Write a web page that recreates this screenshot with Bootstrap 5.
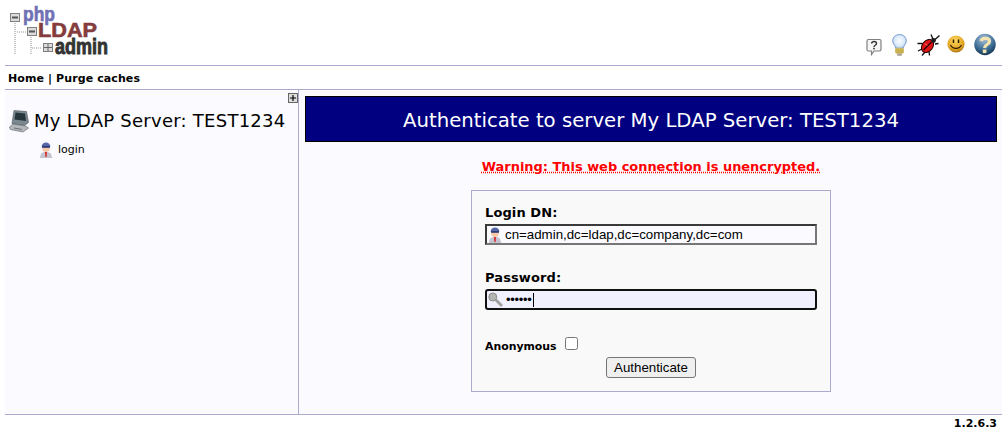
<!DOCTYPE html>
<html lang="en"><head><meta charset="utf-8"><title>phpLDAPadmin</title>
<link href="https://cdn.jsdelivr.net/npm/bootstrap@5.3.0/dist/css/bootstrap.min.css" rel="stylesheet">
<style>
html,body{height:433px;overflow:hidden}
body{background:#fff;color:#000;font-family:"DejaVu Sans",sans-serif;font-size:11px}
.pla-head{height:65px;padding-right:6px}
.pla-logo{display:block}
.pla-tools{padding-bottom:9px}
.pla-t1{margin-right:10px}
.pla-t2{margin-right:10px}
.pla-t3{margin-right:7px}
.pla-t4{margin-right:9px;margin-bottom:2px}
.pla-nav{margin-left:5px;height:25px;border-top:1px solid #aaaacc;border-bottom:1px solid #aaaacc;padding-left:3px;font-weight:700;font-size:11px;line-height:25px;color:#000;letter-spacing:.1px}
.pla-main{margin-left:5px;height:325px;background:#fafaff;border-bottom:1px solid #aaaacc}
.pla-side{width:294px;border-right:1px solid #aaaacc;position:relative;flex:none}
.pla-plus{position:absolute;right:0;top:3px;display:block}
.pla-server{margin:18px 0 0 4px;gap:5px;font-size:18px;letter-spacing:.25px;line-height:26px;height:26px;white-space:nowrap}
.pla-login{margin:7px 0 0 34px;gap:5px;font-size:11px;line-height:17px;color:#000}
.pla-content{flex:1;padding:6px 5px 0 6px;min-width:0}
.pla-title{height:46px;background:#000080;border:1px solid #000;color:#fff;font-size:19.7px;line-height:47px;text-align:center}
.pla-warn{margin-top:16px;color:#f00;font-weight:700;font-size:12.95px;line-height:17px;text-align:center;text-decoration:underline dotted}
.pla-box{width:360px;height:202px;margin:15px auto 0;background:#f9f9f9;border:1px solid #aaaacc;padding:14px 13px 0}
.pla-label{font-weight:700;font-size:13px;line-height:16px;letter-spacing:.1px}
.pla-pwlabel{margin-top:25px}
.pla-field{width:332px;height:21px;margin-top:3px;gap:3px;padding-left:1px;font-family:"Liberation Sans",sans-serif;font-size:13.3px;line-height:17px;white-space:nowrap}
.pla-dn{background:#fafaff;border:2px solid;border-color:#3a3a3a #767676 #767676 #3a3a3a}
.pla-pw{background:#f0f0ff;border:2px solid #101010;border-radius:3px}
.pla-caret{display:inline-block;width:1px;height:14px;background:#000;margin-left:-2px}
.pla-dots{font-size:13px;letter-spacing:-.3px;line-height:17px}
.pla-anon{margin-top:28px;height:18px;gap:8px;font-weight:700;font-size:10.9px}
.pla-check{width:13px;height:13px;border:1px solid #767676;border-radius:2.5px;background:#fff;appearance:none;margin:0 0 7px;display:block}
.pla-btnrow{margin-top:1px}
.pla-btn{width:90px;height:21px;padding:0;background:#efefef;border:1px solid #767676;border-radius:3px;color:#000;font-family:"Liberation Sans",sans-serif;font-size:13.3px;line-height:18px}
.pla-ver{height:18px;padding-right:5px;font-weight:700;font-size:11px;line-height:18px;text-align:right}
</style></head>
<body>
<div class="pla-head d-flex justify-content-between align-items-end">
<svg class="pla-logo align-self-start" width="112" height="63" viewBox="0 -5 112 63" role="img" aria-label="phpLDAPadmin">
<g fill="none" stroke="#c8c8c8" stroke-dasharray="1 1" stroke-width="2"><path d="M15 18V50M17 27H26M31 32V50M32 43H42"/></g>
<g fill="#dcdcdc" stroke="#808080"><rect x="10.500" y="8.500" width="9" height="8"/><rect x="27.500" y="22.500" width="9" height="8"/><rect x="43.500" y="38.500" width="9" height="8"/></g>
<path d="M12 12.500h6M29 26.500h6" stroke="#555" stroke-width="2" fill="none"/><path d="M44 42.500h8M48 39v7" stroke="#666" fill="none"/>
<text x="23" y="15.500" font-family="Liberation Sans" font-weight="700" font-size="20" fill="#7070b4" stroke="#7070b4" stroke-width=".6" textLength="32" lengthAdjust="spacingAndGlyphs">php</text>
<text x="38" y="32" font-family="Liberation Sans" font-weight="700" font-size="20" fill="#843c3c" stroke="#843c3c" stroke-width=".6" textLength="59" lengthAdjust="spacingAndGlyphs">LDAP</text>
<text x="55" y="49" font-family="Liberation Sans" font-weight="700" font-size="22" fill="#333" stroke="#333" stroke-width=".9" textLength="53" lengthAdjust="spacingAndGlyphs">admin</text>
</svg>
<div class="pla-tools d-flex align-items-end">
<svg class="pla-t1" width="16" height="18" viewBox="0 0 16 18" role="img" aria-label="help"><path d="M2.500 1.500H13.500Q15 1.500 15 3V11.500Q15 13 13.500 13H8L5.500 16.500V13H2.500Q1 13 1 11.500V3Q1 1.500 2.500 1.500Z" fill="#f6f6f6" stroke="#808080" stroke-width="1.200"/><path d="M5.500 5.500C6 2.800 10.500 2.800 10.500 5.500C10.500 7.500 8 7 8 9" fill="none" stroke="#333" stroke-width="1.400"/><rect x="7.200" y="9.800" width="1.600" height="1.600" fill="#333"/></svg>
<svg class="pla-t2" width="15" height="22" viewBox="0 0 15 22" role="img" aria-label="idea"><defs><radialGradient id="pla-b" cx=".5" cy=".45" r=".6"><stop offset="0" stop-color="#fafcff"/><stop offset=".65" stop-color="#d8e8f8"/><stop offset="1" stop-color="#8cb0dc"/></radialGradient></defs><path d="M7.500 .6C3 .6 .7 3.500 .7 6.800C.7 10 3.500 11.500 4 14.500H11C11.500 11.500 14.300 10 14.300 6.800C14.300 3.500 12 .6 7.500 .6Z" fill="url(#pla-b)" stroke="#7c9cd0"/><rect x="3.500" y="14.200" width="8" height="5" rx="1" fill="#eed870" stroke="#c0a848" stroke-width=".7"/><path d="M4 16H11M4 18H11" stroke="#a88c30"/><rect x="5" y="19.500" width="5" height="2.300" rx="1" fill="#a8a090"/></svg>
<svg class="pla-t3" width="23" height="22" viewBox="0 0 23 22" role="img" aria-label="bug"><path d="M.5 9.500H5L7 12M1 17L6 14.500M5 21.500L9 17M12.500 21.500L12 17.500M15 4L17.500 7M14 .5L16 5M22.500 1.500L18 5.500M21.500 9.500L18 10" stroke="#111" stroke-width="1.300" fill="none"/><ellipse cx="10.500" cy="12" rx="5.300" ry="7.200" transform="rotate(38 10.500 12)" fill="#e01414" stroke="#200" stroke-width="1"/><circle cx="16.500" cy="6.500" r="2.400" fill="#1c1c1c"/><path d="M6.500 16L14.500 8" stroke="#200" stroke-width="1.200"/><path d="M8 9.500L10 11.500" stroke="#ff9090"/></svg>
<svg class="pla-t4" width="18" height="19" viewBox="0 0 18 19" role="img" aria-label="smile"><defs><radialGradient id="pla-sm" cx=".45" cy=".3" r=".8"><stop offset="0" stop-color="#ffd860"/><stop offset=".65" stop-color="#e0a020"/><stop offset="1" stop-color="#8c6410"/></radialGradient></defs><circle cx="9" cy="9" r="8.600" fill="url(#pla-sm)"/><path d="M6.500 4.500V8M11.500 4.500V8" stroke="#2c2000" stroke-width="1.500"/><path d="M3.500 10C5.500 14.500 12.500 14.500 14.500 10" fill="none" stroke="#2c2000" stroke-width="1.100"/></svg>
<svg width="22" height="23" viewBox="0 0 22 23" role="img" aria-label="documentation"><defs><radialGradient id="pla-q" cx=".45" cy=".25" r=".8"><stop offset="0" stop-color="#a8c4dc"/><stop offset=".6" stop-color="#3c6c94"/><stop offset="1" stop-color="#0c2c48"/></radialGradient></defs><circle cx="11" cy="11.500" r="10.700" fill="url(#pla-q)"/><path d="M7 8C8 4.500 15.500 4.500 15.500 8.500C15.500 11.500 11 11 10.500 15" fill="none" stroke="#f4e4b0" stroke-width="3.200"/><rect x="8.800" y="16.500" width="3.600" height="3.600" fill="#f4e4b0"/></svg>
</div>
</div>
<div class="pla-nav">Home | Purge caches</div>
<div class="pla-main d-flex">
<div class="pla-side">
<svg class="pla-plus" width="10" height="10" viewBox="0 0 10 10" role="img" aria-label="expand"><rect x=".5" y=".5" width="9" height="9" fill="#ddd" stroke="#666"/><path d="M2 5H8M5 2V8" stroke="#000" stroke-width="1.200"/></svg>
<div class="pla-server d-flex align-items-center">
<svg width="20" height="24" viewBox="0 0 20 24" role="img" aria-label="server"><path d="M5 1.500L17.500 2.500L19.500 13.500L15.500 16.500L3 14.500Z" fill="#7c8890" stroke="#4a5258" stroke-width=".6"/><path d="M6.500 3.500L16 4.500L17 12L5.500 10.500Z" fill="#26343c"/><path d="M.5 18L4 15L16.500 17L19.500 19L14 23L1.500 20.500Z" fill="#b4b8bc" stroke="#585c60" stroke-width=".6"/><path d="M5 19L13 20.500" stroke="#6c7074"/></svg>
<span>My LDAP Server: TEST1234</span>
</div>
<div class="pla-login d-flex align-items-center">
<svg width="14" height="17" viewBox="0 0 14 17" role="img" aria-label="user"><path d="M.8 17L2 12.500L5 11H9L12 12.500L13.200 17Z" fill="#c4c4d0"/><path d="M6 11H8L7.700 16H6.300Z" fill="#d83030"/><circle cx="7" cy="7" r="3.900" fill="#f4c8a8"/><path d="M2.600 5.500C3 .2 11 .2 11.400 5.500Z" fill="#5468a8"/><rect x="3" y="5" width="8" height="1.800" fill="#303c78"/></svg>
<span>login</span>
</div>
</div>
<div class="pla-content">
<div class="pla-title">Authenticate to server My LDAP Server: TEST1234</div>
<div class="pla-warn">Warning: This web connection is unencrypted.</div>
<form class="pla-box">
<div class="pla-label">Login DN:</div>
<div class="pla-field pla-dn d-flex align-items-center">
<svg width="14" height="17" viewBox="0 0 14 17" role="img" aria-label="user"><path d="M.8 17L2 12.500L5 11H9L12 12.500L13.200 17Z" fill="#c4c4d0"/><path d="M6 11H8L7.700 16H6.300Z" fill="#d83030"/><circle cx="7" cy="7" r="3.900" fill="#f4c8a8"/><path d="M2.600 5.500C3 .2 11 .2 11.400 5.500Z" fill="#5468a8"/><rect x="3" y="5" width="8" height="1.800" fill="#303c78"/></svg>
<span>cn=admin,dc=ldap,dc=company,dc=com</span>
</div>
<div class="pla-label pla-pwlabel">Password:</div>
<div class="pla-field pla-pw d-flex align-items-center">
<svg width="15" height="15" viewBox="0 0 15 15" role="img" aria-label="key"><circle cx="4.800" cy="5" r="4" fill="#b4b4b4" stroke="#8c8c8c"/><path d="M7.500 7.500L14 14" stroke="#a0a0a0" stroke-width="2.800"/></svg>
<span class="pla-dots">••••••</span><span class="pla-caret"></span>
</div>
<div class="pla-anon d-flex align-items-center">
<span>Anonymous</span><input class="pla-check" type="checkbox" aria-label="Anonymous">
</div>
<div class="pla-btnrow d-flex justify-content-center"><button class="pla-btn" type="button">Authenticate</button></div>
</form>
</div>
</div>
<div class="pla-ver">1.2.6.3</div>
</body></html>
